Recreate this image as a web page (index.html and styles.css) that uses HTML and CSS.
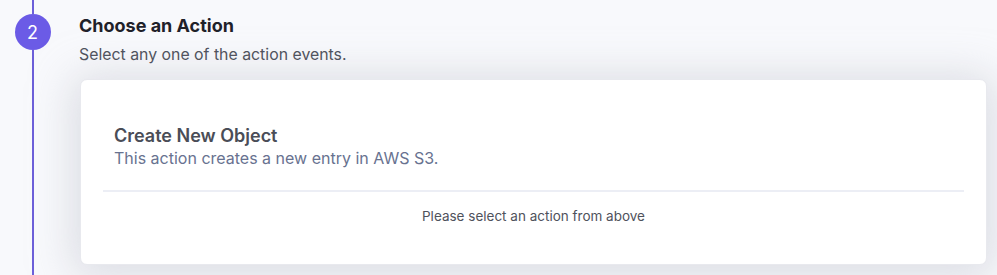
FILE: index.html
```html
<!DOCTYPE html>
<html>
<head>
<meta charset="utf-8">
<link rel="stylesheet" href="styles.css">
</head>
<body>
<div class="step">
  <div class="rail">
    <div class="line-top"></div>
    <div class="badge">2</div>
    <div class="line-bottom"></div>
  </div>
  <div class="content">
    <h2 class="title">Choose an Action</h2>
    <p class="subtitle">Select any one of the action events.</p>
    <div class="card">
      <div class="option">
        <div class="option-name">Create New Object</div>
        <div class="option-desc">This action creates a new entry in AWS S3.</div>
      </div>
      <div class="divider"></div>
      <div class="hint">Please select an action from above</div>
    </div>
  </div>
</div>
</body>
</html>
```

FILE: styles.css
```css
html, body {
  margin: 0;
  padding: 0;
  background: #f8f9fc;
  font-family: Inter, "Noto Sans", sans-serif;
  overflow: hidden;
}
.step {
  display: flex;
  height: 275px;
}
.rail {
  width: 65px;
  display: flex;
  flex-direction: column;
  align-items: center;
  flex-shrink: 0;
}
.line-top {
  width: 2px;
  height: 14px;
  background: #6c5fd9;
}
.badge {
  width: 36px;
  height: 36px;
  border-radius: 50%;
  background: #6b5be6;
  color: #fff;
  font-size: 18px;
  display: flex;
  align-items: center;
  justify-content: center;
}
.line-bottom {
  width: 2px;
  flex: 1;
  background: #6c5fd9;
}
.content {
  flex: 1;
  padding-left: 14px;
  padding-right: 10px;
}
.title {
  margin: 15px 0 0;
  font-size: 18px;
  font-weight: 700;
  color: #1f2129;
  line-height: 22px;
}
.subtitle {
  margin: 8px 0 0;
  font-size: 15.85px;
  color: #50535e;
  line-height: 20px;
}
.card {
  margin-top: 14px;
  margin-left: 1px;
  background: #fff;
  border: 1px solid #e8e9ee;
  border-radius: 7px;
  box-shadow: 0 4px 40px 8px rgba(196, 198, 208, 0.55);
  padding: 0 22px;
  height: 186px;
  box-sizing: border-box;
}
.option {
  padding: 45px 11px 0;
}
.option-name {
  font-size: 18px;
  font-weight: 600;
  color: #4a4d57;
  line-height: 22px;
}
.option-desc {
  font-size: 16px;
  color: #687290;
  line-height: 20px;
  margin-top: 1px;
}
.divider {
  margin-top: 22px;
  height: 2px;
  background: #eceef5;
}
.hint {
  text-align: center;
  font-size: 13.5px;
  color: #4f525c;
  margin-top: 15px;
  line-height: 18px;
}
```
